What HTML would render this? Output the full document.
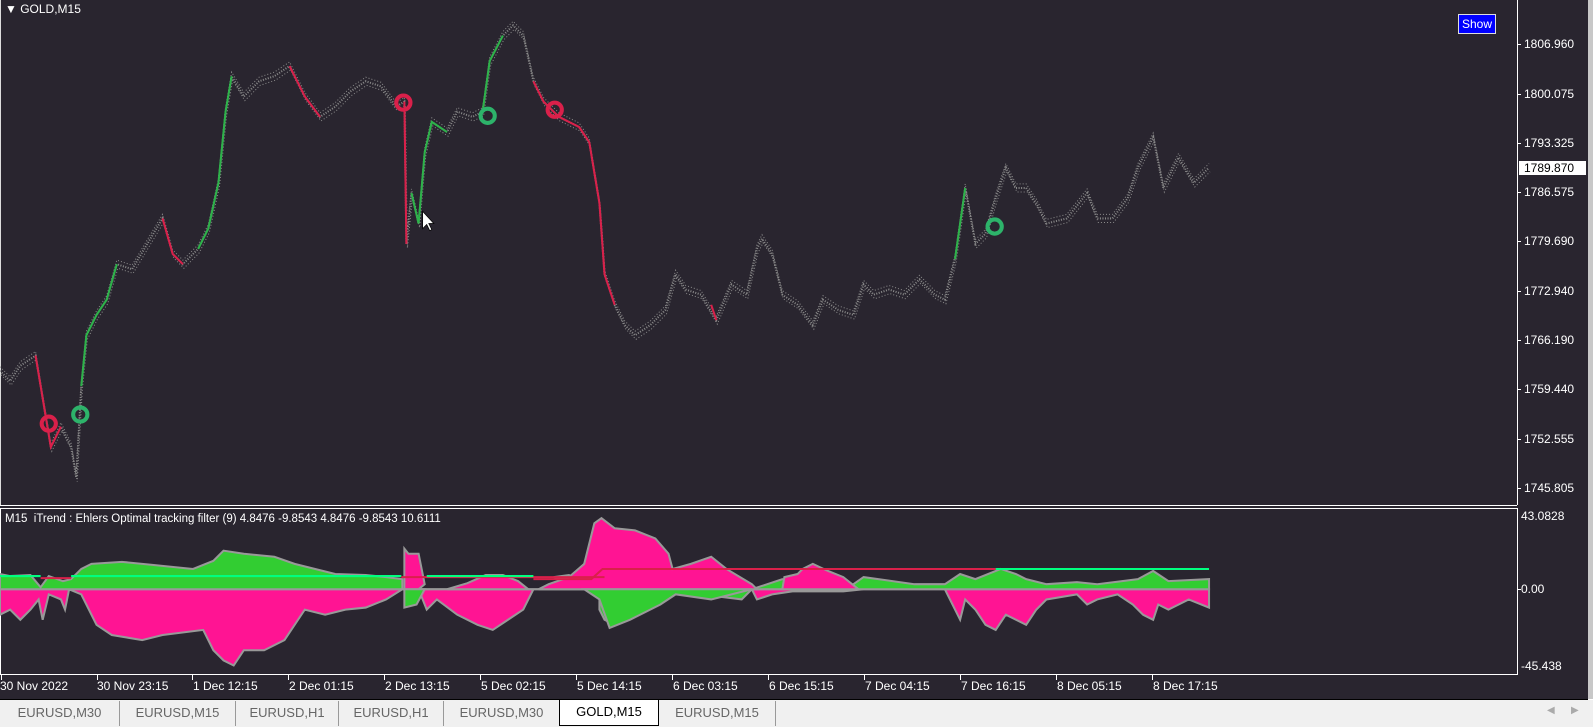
<!DOCTYPE html>
<html><head><meta charset="utf-8"><style>
body{margin:0;width:1593px;height:726px;overflow:hidden;background:#29252f;font-family:"Liberation Sans",sans-serif}
.t{position:absolute;color:#fff;font-size:12px;white-space:nowrap}
.tab{position:absolute;top:701px;height:25px;line-height:24px;font-size:13px;color:#666;text-align:center;border-right:1px solid #999}
</style></head><body>
<svg width="1593" height="726" style="position:absolute;left:0;top:0">
<defs>
<polyline id="pp" fill="none" points="0,365 10,375 20,360 35,350 45,410 50,440 60,420 70,440 75,470 80,380 85,330 95,310 105,295 115,260 130,265 145,240 160,215 170,250 180,260 195,245 205,225 215,180 222,110 228,75 240,95 255,80 270,75 285,65 300,95 315,115 330,105 345,90 360,80 375,85 390,105 398,100 400,240 405,190 412,220 418,150 425,120 440,130 450,110 465,115 475,110 482,60 495,35 505,25 515,35 525,80 535,100 550,115 570,125 580,140 590,200 595,270 605,300 615,320 625,330 640,320 655,305 665,270 675,285 690,290 705,315 720,280 735,290 745,245 750,235 760,250 770,290 785,300 800,320 810,295 825,305 840,310 850,280 860,290 875,285 890,290 905,275 920,290 930,295 940,255 950,185 960,240 970,230 980,195 990,165 1000,185 1010,185 1020,200 1030,220 1050,215 1070,190 1080,215 1095,215 1110,195 1120,165 1135,135 1145,185 1160,155 1175,180 1190,165"/>
</defs>
<rect x="0" y="0" width="1593" height="726" fill="#29252f"/>
<rect x="1588" y="0" width="5" height="700" fill="#c8c8c8"/>
<line x1="0.5" y1="0" x2="0.5" y2="505" stroke="#ddd"/>
<line x1="0" y1="505.5" x2="1517" y2="505.5" stroke="#fff"/>
<rect x="0.5" y="508.5" width="1517" height="166" fill="none" stroke="#fff"/>
<line x1="1517.5" y1="0" x2="1517.5" y2="505" stroke="#fff"/>
<g fill="#fff">
<rect x="1517" y="44" width="4" height="1"/><rect x="1517" y="94" width="4" height="1"/><rect x="1517" y="143" width="4" height="1"/><rect x="1517" y="192" width="4" height="1"/><rect x="1517" y="241" width="4" height="1"/><rect x="1517" y="291" width="4" height="1"/><rect x="1517" y="340" width="4" height="1"/><rect x="1517" y="389" width="4" height="1"/><rect x="1517" y="439" width="4" height="1"/><rect x="1517" y="488" width="4" height="1"/>
<rect x="1517" y="589" width="4" height="1"/>
</g>
<g stroke="#fff"><line x1="1.5" y1="675" x2="1.5" y2="680"/><line x1="97.5" y1="675" x2="97.5" y2="680"/><line x1="192.5" y1="675" x2="192.5" y2="680"/><line x1="288.5" y1="675" x2="288.5" y2="680"/><line x1="384.5" y1="675" x2="384.5" y2="680"/><line x1="480.5" y1="675" x2="480.5" y2="680"/><line x1="576.5" y1="675" x2="576.5" y2="680"/><line x1="672.5" y1="675" x2="672.5" y2="680"/><line x1="768.5" y1="675" x2="768.5" y2="680"/><line x1="864.5" y1="675" x2="864.5" y2="680"/><line x1="960.5" y1="675" x2="960.5" y2="680"/><line x1="1056.5" y1="675" x2="1056.5" y2="680"/><line x1="1152.5" y1="675" x2="1152.5" y2="680"/></g>
<g transform="scale(1.016)">
<use href="#pp" stroke="#8a8a8a" stroke-width="1" stroke-dasharray="1 2" transform="translate(0,-4)"/>
<use href="#pp" stroke="#8a8a8a" stroke-width="1" stroke-dasharray="1 2" transform="translate(1,4)"/>
<use href="#pp" stroke="#8a8a8a" stroke-width="2" stroke-dasharray="1 1.5"/>
<g fill="none" stroke-width="2">
<polyline stroke="#2db34a" points="80,380 85,330 95,310 105,295 115,260"/>
<polyline stroke="#2db34a" points="195,245 205,225 215,180 222,110 228,75"/>
<polyline stroke="#d9204a" points="35,350 45,410 50,440 60,420"/>
<polyline stroke="#d9204a" points="160,215 170,250 180,260"/>
<polyline stroke="#d9204a" points="285,65 300,95 315,115"/>
<polyline stroke="#d9204a" points="398,100 400,240"/>
<polyline stroke="#2db34a" points="405,190 412,220 418,150 425,120 440,130"/>
<polyline stroke="#2db34a" points="475,110 482,60 495,35"/>
<polyline stroke="#d9204a" points="525,80 535,100 550,115 570,125 580,140 590,200 595,270 605,300"/>
<polyline stroke="#2db34a" points="940,255 950,185"/>
<polyline stroke="#d9204a" points="700,300 705,315"/>
</g>
<g stroke-width="4" fill="none">
<circle cx="48" cy="417" r="7" stroke="#d9204a"/><circle cx="397" cy="101" r="7" stroke="#d9204a"/><circle cx="546" cy="108" r="7" stroke="#d9204a"/>
<circle cx="79" cy="408" r="7" stroke="#2db36a"/><circle cx="480" cy="114" r="7" stroke="#2db36a"/><circle cx="979" cy="223" r="7" stroke="#2db36a"/>
</g>
<path d="M416,208 l0,17 4,-4 3,6 2,-1 -3,-6 5,0 z" fill="#fff" stroke="#000" stroke-width=".7"/>
<polygon fill="#ff1493" stroke="#999" stroke-width="2" points="0,580 0,605 10,600 20,610 30,600 38,590 42,610 48,585 60,590 64,600 68,580 80,585 95,615 110,625 140,630 160,625 200,620 210,640 220,650 230,655 240,640 260,640 280,630 300,600 320,605 340,600 360,598 380,590 396,580 412,580 420,600 430,590 450,605 470,615 485,620 500,610 515,600 525,580 740,580 745,590 760,585 780,582 830,582 850,580 930,580 940,600 945,610 950,590 960,600 970,615 980,620 990,605 1010,615 1020,600 1030,590 1060,585 1070,595 1080,590 1100,585 1115,595 1125,605 1135,610 1140,595 1150,600 1170,590 1190,598 1190,580 Z"/>
<polygon fill="#32cd32" stroke="#999" stroke-width="2" points="0,580 0,565 10,567 30,566 40,578 48,567 62,572 70,570 80,560 90,555 120,553 150,556 190,560 210,552 220,542 240,545 270,548 290,555 330,565 360,566 380,568 396,570 396,580 580,580 575,575 545,568 560,566 582,575 590,585 590,600 595,610 605,615 625,605 660,585 690,585 730,590 740,580 770,570 790,575 810,578 840,575 850,568 900,575 930,575 945,565 960,570 985,560 1000,565 1010,570 1030,575 1060,573 1080,575 1120,570 1135,562 1150,572 1190,570 1190,580 Z"/>
<polygon fill="#ff1493" stroke="#999" stroke-width="2" points="398,580 398,540 402,545 412,545 418,575 412,580"/>
<polygon fill="#32cd32" stroke="#999" stroke-width="2" points="398,580 398,598 410,595 418,580"/>
<polygon fill="#ff1493" stroke="#999" stroke-width="2" points="530,580 540,575 560,568 575,555 585,515 592,510 605,520 625,522 645,530 658,545 662,560 680,555 700,548 715,560 740,575 745,580"/>
<polygon fill="#32cd32" stroke="#999" stroke-width="2" points="575,580 590,590 600,618 620,610 650,595 665,585 700,590 740,580"/>
<polygon fill="#ff1493" stroke="#999" stroke-width="2" points="770,580 772,568 785,565 790,560 800,555 815,562 830,568 845,580"/>
<polygon fill="#ff1493" stroke="#999" stroke-width="2" points="440,580 460,574 478,566 495,566 510,572 520,580"/>
<g fill="none" stroke-width="2">
<polyline stroke="#00ff7f" points="0,567 40,567"/><polyline stroke="#d9204a" points="40,569 70,569"/><polyline stroke="#00ff7f" points="70,567 395,567"/>
<polyline stroke="#d9204a" points="395,568 440,568 595,568"/><polyline stroke="#00ff7f" points="420,567 480,567 525,567"/>
<polyline stroke="#d9204a" points="525,570 582,570 593,560 980,560"/><polyline stroke="#00ff7f" points="980,560 1190,560"/>
</g>
</g>
</svg>
<div class="t" style="left:5px;top:2px;font-size:12px">&#9660; GOLD,M15</div>
<div style="position:absolute;left:1458px;top:14px;width:36px;height:18px;background:#0000ff;border:1px solid #ddd;color:#fff;font-size:12px;line-height:18px;text-align:center">Show</div>
<div class="t" style="left:1524px;top:37px">1806.960</div>
<div class="t" style="left:1524px;top:87px">1800.075</div>
<div class="t" style="left:1524px;top:136px">1793.325</div>
<div style="position:absolute;left:1519px;top:161px;width:62px;height:14px;background:#fff;color:#000;font-size:12px;line-height:14px;padding-left:5px">1789.870</div>
<div class="t" style="left:1524px;top:185px">1786.575</div>
<div class="t" style="left:1524px;top:234px">1779.690</div>
<div class="t" style="left:1524px;top:284px">1772.940</div>
<div class="t" style="left:1524px;top:333px">1766.190</div>
<div class="t" style="left:1524px;top:382px">1759.440</div>
<div class="t" style="left:1524px;top:432px">1752.555</div>
<div class="t" style="left:1524px;top:481px">1745.805</div>
<div class="t" style="left:1521px;top:509px">43.0828</div>
<div class="t" style="left:1521px;top:582px">0.00</div>
<div class="t" style="left:1521px;top:659px">-45.438</div>
<div class="t" style="left:5px;top:513px;font-size:11.5px">M15&nbsp; iTrend : Ehlers Optimal tracking filter (9) 4.8476 -9.8543 4.8476 -9.8543 10.6111</div>
<div class="t" style="left:0;top:679px">30 Nov 2022</div>
<div class="t" style="left:97px;top:679px">30 Nov 23:15</div>
<div class="t" style="left:193px;top:679px">1 Dec 12:15</div>
<div class="t" style="left:289px;top:679px">2 Dec 01:15</div>
<div class="t" style="left:385px;top:679px">2 Dec 13:15</div>
<div class="t" style="left:481px;top:679px">5 Dec 02:15</div>
<div class="t" style="left:577px;top:679px">5 Dec 14:15</div>
<div class="t" style="left:673px;top:679px">6 Dec 03:15</div>
<div class="t" style="left:769px;top:679px">6 Dec 15:15</div>
<div class="t" style="left:865px;top:679px">7 Dec 04:15</div>
<div class="t" style="left:961px;top:679px">7 Dec 16:15</div>
<div class="t" style="left:1057px;top:679px">8 Dec 05:15</div>
<div class="t" style="left:1153px;top:679px">8 Dec 17:15</div>
<div style="position:absolute;left:0;top:699px;width:1593px;height:27px;background:#f0f0f0;border-top:1px solid #fff"></div>
<div style="position:absolute;left:0;top:699px;width:1588px;height:1px;background:#000"></div>
<div class="tab" style="left:0;width:119px">EURUSD,M30</div>
<div class="tab" style="left:120px;width:115px">EURUSD,M15</div>
<div class="tab" style="left:236px;width:102px">EURUSD,H1</div>
<div class="tab" style="left:339px;width:104px">EURUSD,H1</div>
<div class="tab" style="left:444px;width:115px;border-right:none">EURUSD,M30</div>
<div class="tab" style="left:559px;top:700px;width:98px;background:#fff;color:#000;border:1px solid #000;border-top:none;height:25px">GOLD,M15</div>
<div class="tab" style="left:659px;width:116px">EURUSD,M15</div>
<div style="position:absolute;left:1547px;top:705px;color:#aaa;font-size:10px">&#9664;</div>
<div style="position:absolute;left:1571px;top:705px;color:#aaa;font-size:10px">&#9654;</div>
</body></html>
